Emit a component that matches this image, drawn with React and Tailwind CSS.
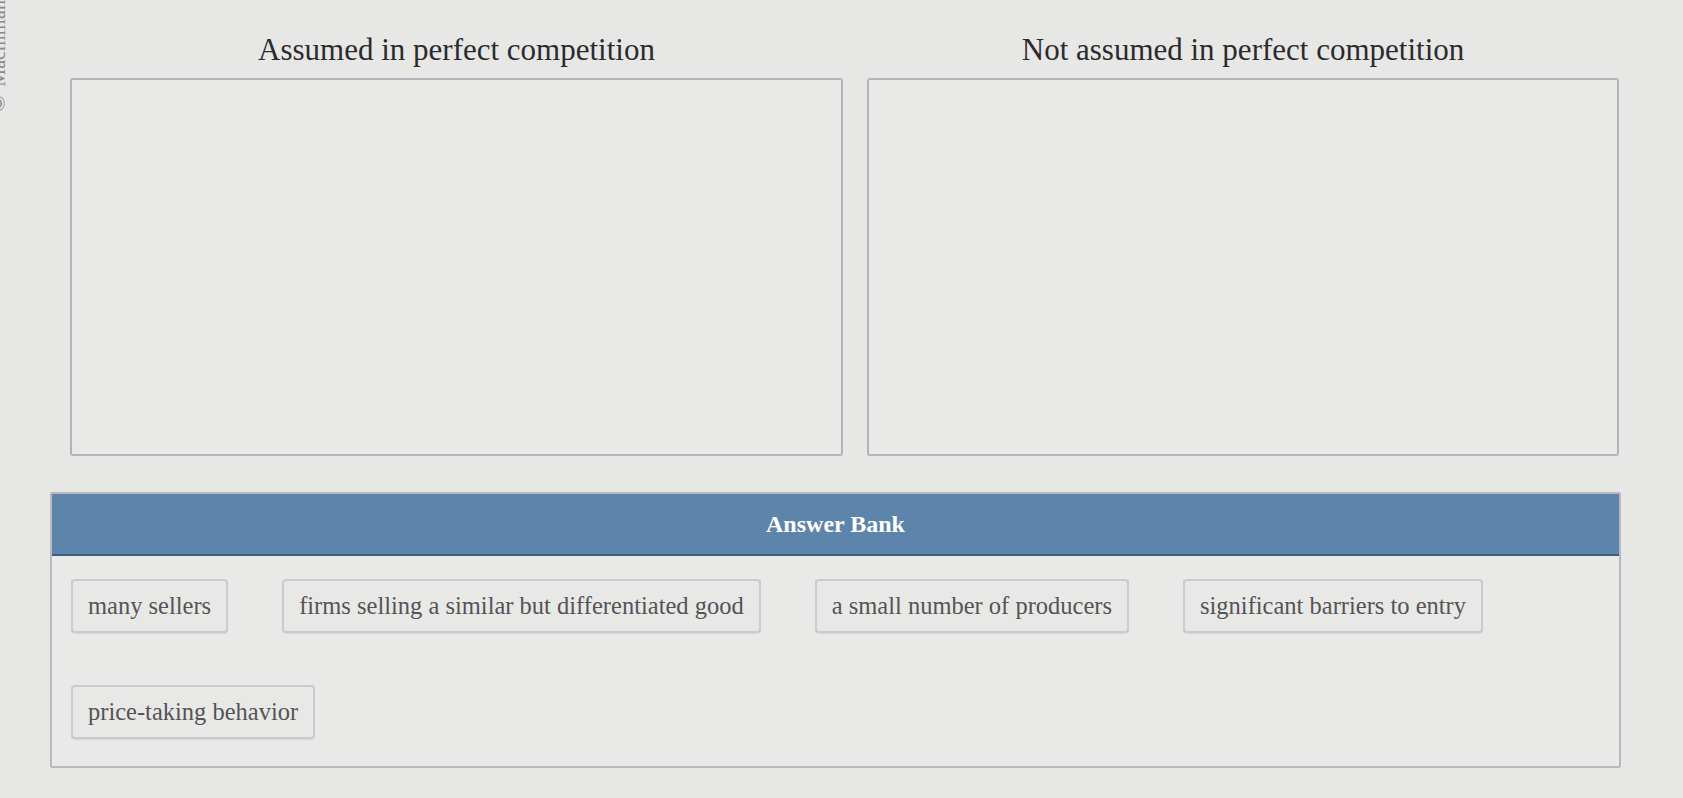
import React from "react";

const columns = [
  { title: "Assumed in perfect competition", width: "w-[773px]" },
  { title: "Not assumed in perfect competition", width: "w-[752px]" },
];

const answers = [
  "many sellers",
  "firms selling a similar but differentiated good",
  "a small number of producers",
  "significant barriers to entry",
  "price-taking behavior",
];

function DropZone({ title, width }) {
  return (
    <div className={`${width} flex flex-col items-center`}>
      <h2 className="text-[31px] leading-[36px] text-[#2b2b2d] mb-[10px]">
        {title}
      </h2>
      <div className="w-full h-[378px] border-2 border-[#b4b3b8] rounded-[3px] bg-[#e9e9e7]" />
    </div>
  );
}

function Chip({ label }) {
  return (
    <div className="h-[54px] px-[15px] flex items-center border-2 border-[#cbcacc] rounded-[4px] bg-[#e8e8e6] shadow-[0_1px_1px_rgba(0,0,0,0.08)] text-[24.5px] text-[#545456]">
      {label}
    </div>
  );
}

export default function App() {
  return (
    <div
      className="min-h-screen h-[798px] bg-[#e7e7e5] flex overflow-hidden"
      style={{ fontFamily: '"Liberation Serif", "Times New Roman", serif' }}
    >
      {/* copyright strip at the page edge */}
      <div className="w-[9px] h-[140px] overflow-hidden shrink-0">
        <div className="-ml-[12px] [writing-mode:vertical-rl] rotate-180 text-[20px] leading-[20px] text-[#8a8a8c] whitespace-nowrap">
          © Macmillan
        </div>
      </div>

      <div className="flex-1 flex flex-col pl-[41px] pt-[32px]">
        <div className="flex gap-[24px] pl-[20px]">
          {columns.map((c) => (
            <DropZone key={c.title} title={c.title} width={c.width} />
          ))}
        </div>

        <div className="mt-[36px] w-[1571px] border-2 border-[#b9b9bd] rounded-[2px] bg-[#e9e9e7]">
          <div className="h-[62px] bg-[#5d84aa] flex items-center justify-center border-b-2 border-[#3d5f80]">
            <span className="text-white text-[24px] font-bold">Answer Bank</span>
          </div>
          <div className="flex flex-wrap gap-x-[54px] gap-y-[52px] px-[19px] pt-[23px] pb-[27px]">
            {answers.map((a) => (
              <Chip key={a} label={a} />
            ))}
          </div>
        </div>
      </div>
    </div>
  );
}
